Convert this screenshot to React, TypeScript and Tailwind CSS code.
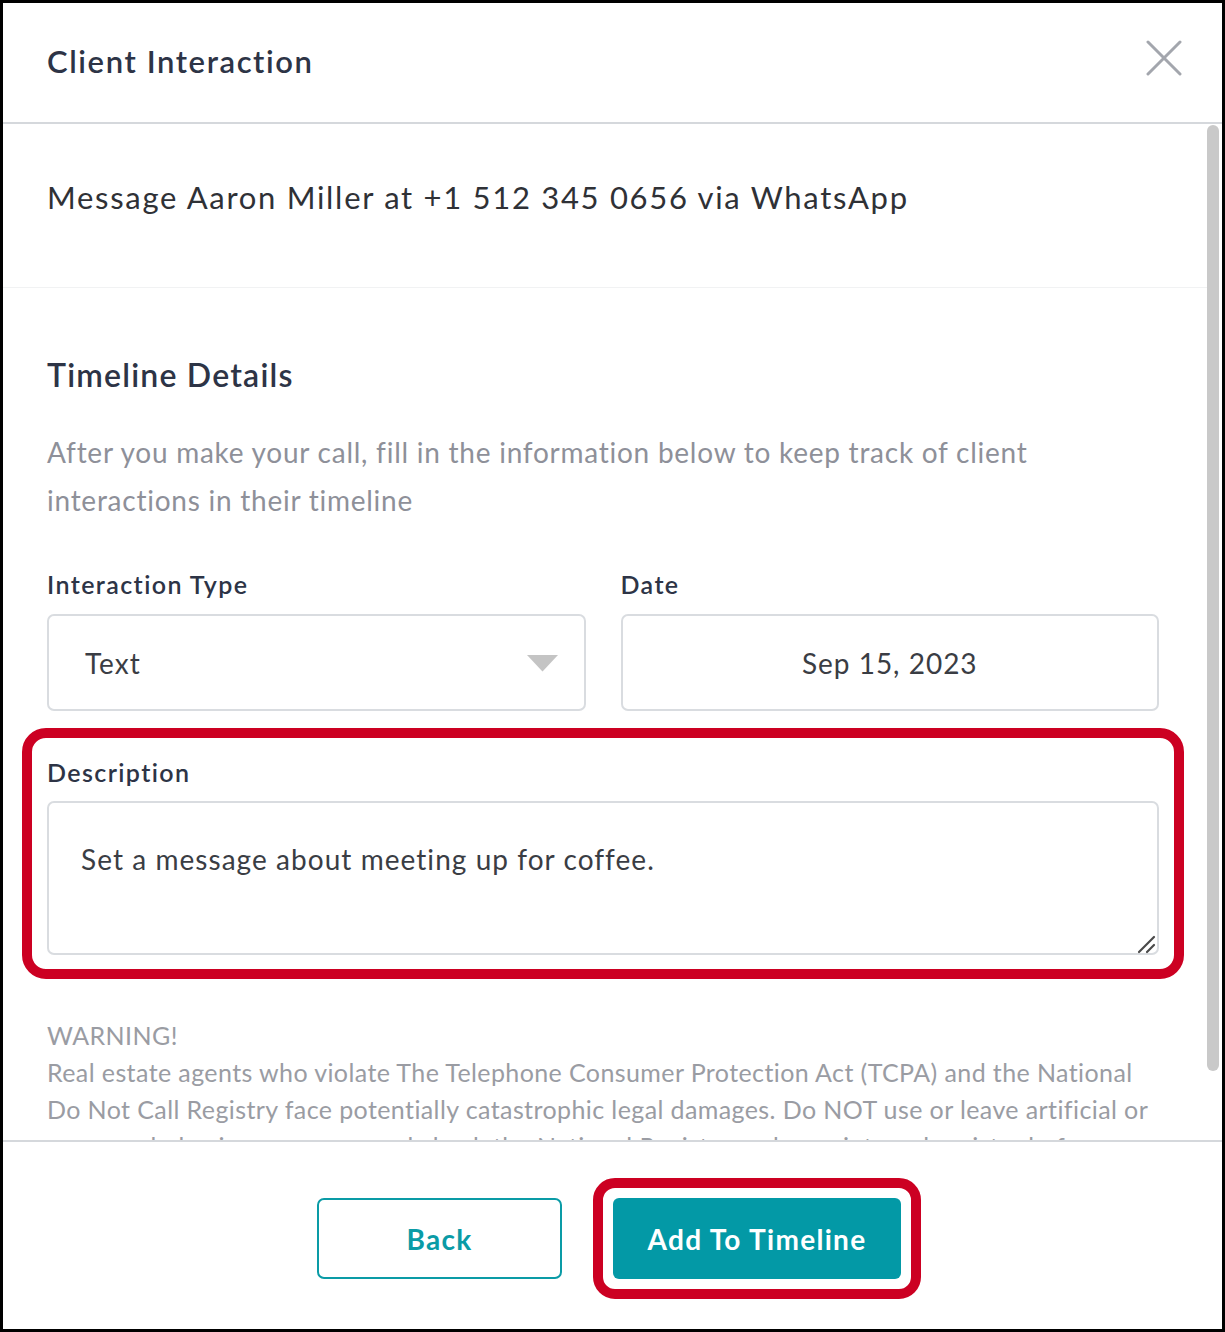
import React from "react";

function CloseIcon() {
  return (
    <svg width="36" height="36" viewBox="0 0 36 36" fill="none">
      <path d="M2 2L34 34M34 2L2 34" stroke="#a3a6ad" strokeWidth="3" strokeLinecap="round" />
    </svg>
  );
}

function ResizeGrip() {
  return (
    <svg width="22" height="22" viewBox="0 0 22 22" fill="none">
      <path d="M4 20L19 5M12 20L19 13" stroke="#4a4a4a" strokeWidth="2.2" strokeLinecap="round" />
    </svg>
  );
}

export default function App() {
  return (
    <div
      className="w-[1225px] h-[1332px] border-[3px] border-black bg-white flex flex-col overflow-hidden"
      style={{ fontFamily: "Lato, 'Noto Sans', sans-serif" }}
    >
      {/* header */}
      <div className="h-[121px] shrink-0 flex items-center justify-between pl-[44px] pr-[40px] border-b-2 border-[#d5d8dc]">
        <h1 className="text-[31px] font-semibold text-[#2d3446] leading-[40px] tracking-[1.6px] -mt-[3px]">
          Client Interaction
        </h1>
        <button className="-mt-[10px]">
          <CloseIcon />
        </button>
      </div>

      {/* scrolling body */}
      <div className="flex-1 min-h-0 flex">
        <div className="flex-1 min-w-0 overflow-hidden">
          <div className="h-[164px] flex items-center pl-[44px] pb-[18px] border-b border-[#f1f2f3]">
            <p className="text-[31px] leading-[40px] tracking-[1.7px] text-[#2f3136]">
              Message Aaron Miller at +1 512 345 0656 via WhatsApp
            </p>
          </div>

          <div className="pl-[44px] pr-[48px] pt-[67px]">
            <h2 className="text-[32px] font-semibold leading-[40px] tracking-[1.2px] text-[#2d3446]">
              Timeline Details
            </h2>
            <p className="mt-[33px] text-[28px] leading-[48px] tracking-[0.75px] text-[#8e9099]">
              After you make your call, fill in the information below to keep track of client interactions in their timeline
            </p>

            <div className="mt-[44px] grid grid-cols-2 gap-[35px]">
              <div>
                <label className="block text-[25px] font-semibold leading-[32px] tracking-[1.4px] text-[#2d3446]">
                  Interaction Type
                </label>
                <div className="mt-[14px] h-[97px] rounded-[7px] border-2 border-[#d9dce0] flex items-center justify-between pl-[36px] pr-[26px]">
                  <span className="text-[28px] tracking-[1px] text-[#3a3d44]">Text</span>
                  <svg width="31" height="17" viewBox="0 0 31 17" className="mt-[2px]">
                    <path d="M0 0H31L15.5 16.5Z" fill="#c4c4c4" />
                  </svg>
                </div>
              </div>
              <div>
                <label className="block text-[25px] font-semibold leading-[32px] tracking-[1.4px] text-[#2d3446]">
                  Date
                </label>
                <div className="mt-[14px] h-[97px] rounded-[7px] border-2 border-[#d9dce0] flex items-center justify-center">
                  <span className="text-[28px] tracking-[1px] text-[#3a3d44]">Sep 15, 2023</span>
                </div>
              </div>
            </div>

            {/* highlighted description field */}
            <div className="mt-[17px] -mx-[25px] border-[10px] border-[#cc0022] rounded-[24px] px-[15px] pt-[18px] pb-[14px]">
              <label className="block text-[25px] font-semibold leading-[32px] tracking-[1.4px] text-[#2d3446]">
                Description
              </label>
              <div className="relative mt-[13px]">
                <textarea
                  defaultValue="Set a message about meeting up for coffee."
                  className="block w-full h-[154px] resize-none rounded-[7px] border-2 border-[#d9dce0] pl-[32px] pt-[36px] text-[28px] leading-[40px] tracking-[1.05px] text-[#3a3d44] outline-none"
                  style={{ fontFamily: "Lato, 'Noto Sans', sans-serif" }}
                />
                <div className="absolute right-[2px] bottom-[1px] pointer-events-none">
                  <ResizeGrip />
                </div>
              </div>
            </div>

            <div className="mt-[38px] text-[25px] leading-[37px] tracking-[0.4px] text-[#9a9ca3]">
              <p>WARNING!</p>
              <p>
                Real estate agents who violate The Telephone Consumer Protection Act (TCPA) and the National Do Not Call Registry face potentially catastrophic legal damages. Do NOT use or leave artificial or prerecorded voice messages and check the National Registry and your internal registry before you call clients.
              </p>
            </div>
          </div>
        </div>

        {/* scrollbar */}
        <div className="w-[15px] shrink-0 pt-[1px] pr-[2px]">
          <div className="w-[12px] h-[946px] rounded-full bg-[#c9c9c9]" />
        </div>
      </div>

      {/* footer */}
      <div className="h-[189px] shrink-0 border-t-2 border-[#d5d8dc] flex items-center justify-center gap-[31px] pt-[6px] pl-[13px]">
        <button className="w-[245px] h-[81px] rounded-[7px] border-2 border-[#0a9ba6] text-[#0a9ba6] text-[28px] font-bold tracking-[1.3px]">
          Back
        </button>
        <div className="border-[10px] border-[#cc0022] rounded-[22px] p-[10px]">
          <button className="w-[288px] h-[81px] rounded-[6px] bg-[#0399a6] text-white text-[28px] font-bold tracking-[1.3px]">
            Add To Timeline
          </button>
        </div>
      </div>
    </div>
  );
}
